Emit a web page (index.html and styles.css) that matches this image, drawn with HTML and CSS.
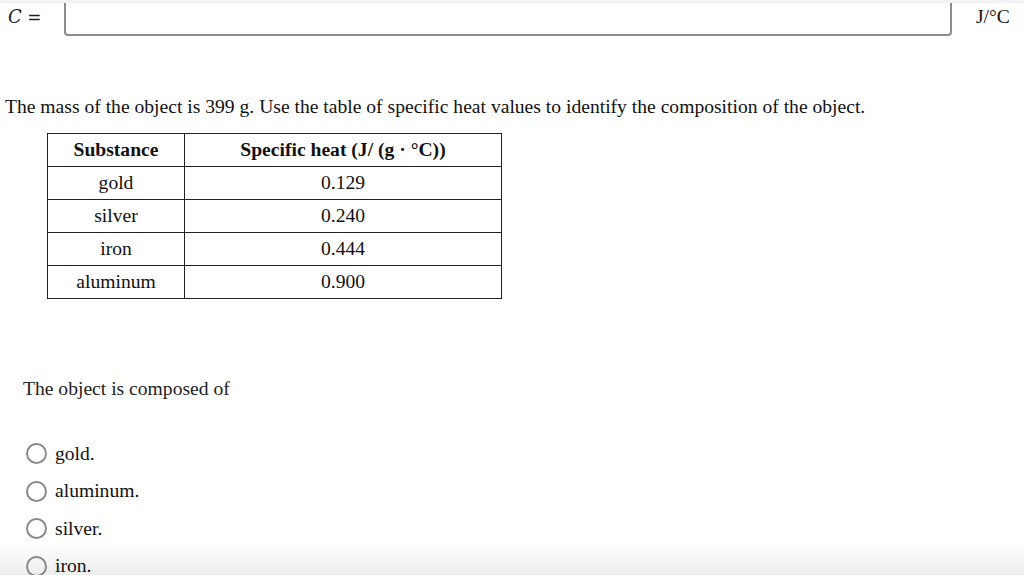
FILE: index.html
```html
<!DOCTYPE html>
<html>
<head>
<meta charset="utf-8">
<link rel="stylesheet" href="styles.css">
</head>
<body>
<div class="topband"></div>
<div class="answer-row">
  <span class="var"><i class="sym">C</i> =</span>
  <div class="input-box"></div>
  <span class="unit">J/°C</span>
</div>
<p class="prompt">The mass of the object is 399 g. Use the table of specific heat values to identify the composition of the object.</p>
<table class="heat">
  <tr><th class="c1">Substance</th><th class="c2">Specific heat (J/ (g · °C))</th></tr>
  <tr><td>gold</td><td>0.129</td></tr>
  <tr><td>silver</td><td>0.240</td></tr>
  <tr><td>iron</td><td>0.444</td></tr>
  <tr><td>aluminum</td><td>0.900</td></tr>
</table>
<p class="question">The object is composed of</p>
<ul class="choices">
  <li><span class="radio"></span>gold.</li>
  <li><span class="radio"></span>aluminum.</li>
  <li><span class="radio"></span>silver.</li>
  <li><span class="radio"></span>iron.</li>
</ul>
</body>
</html>
```
FILE: styles.css
```css
html, body { margin: 0; padding: 0; }
body {
  width: 1024px; height: 575px; overflow: hidden;
  font-family: "Liberation Serif", "Times New Roman", serif; color: #111;
  background: linear-gradient(to bottom, #fff 0, #fff 543px, #ededed 575px);
}
.topband { height: 3px; background: #f3f3f3; }
.answer-row {
  display: flex; align-items: flex-start; height: 33px;
}
.var {
  font-family: "DejaVu Sans", sans-serif; font-size: 17px; color: #222;
  width: 64px; padding-left: 8px; box-sizing: border-box; line-height: 28px;
}
.sym { font-family: "DejaVu Serif", serif; font-size: 18px; }
.input-box {
  width: 888px; height: 33px; box-sizing: border-box;
  border: 2px solid #8c8c8c; border-top: none;
  border-radius: 0 0 4px 4px;
}
.unit {
  font-size: 19.5px; margin-left: 24px; line-height: 28px; color: #111;
}
.prompt {
  margin: 59px 0 0 5px; font-size: 19.6px; line-height: 24px;
}
.heat {
  border-collapse: collapse; margin: 14px 0 0 47px; font-size: 19.6px;
}
.heat th, .heat td {
  border: 1px solid #222; text-align: center; height: 32px; padding: 0; line-height: 22px;
}
.heat th { font-weight: bold; }
.heat .c1 { width: 136px; }
.heat .c2 { width: 316px; }
.question {
  margin: 78px 0 0 23px; font-size: 19.6px; line-height: 24px; color: #222;
}
.choices { list-style: none; margin: 34px 0 0 0; padding: 0; }
.choices li {
  display: flex; align-items: center; height: 37.5px; font-size: 19.6px; padding-left: 26px;
}
.radio {
  width: 17px; height: 17px; border: 2px solid #8a8a8a; border-radius: 50%;
  margin-right: 8px; flex: none;
}
```
